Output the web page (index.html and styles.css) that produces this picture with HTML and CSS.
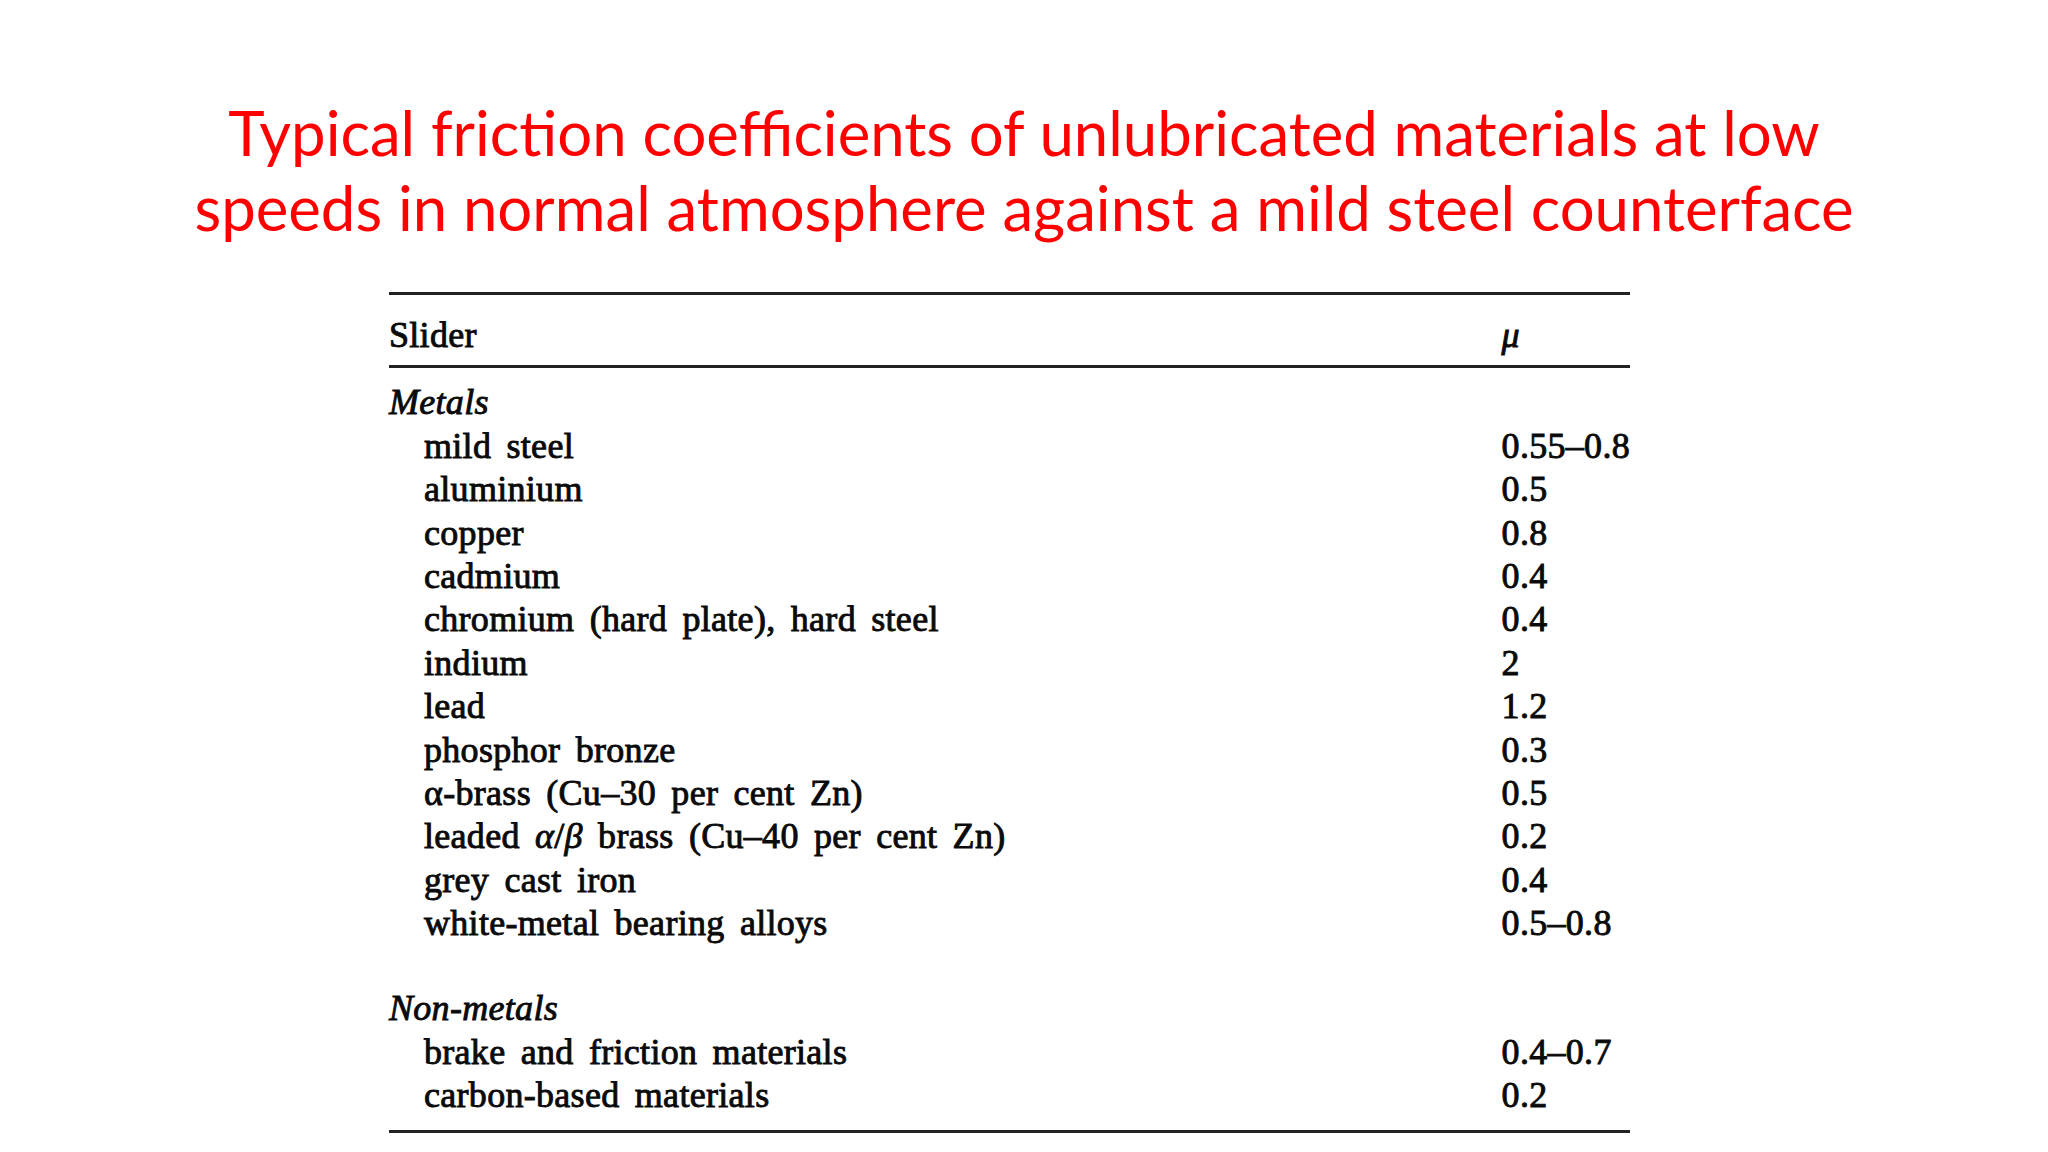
FILE: index.html
```html
<!DOCTYPE html>
<html lang="en">
<head>
    <meta charset="UTF-8">
    <meta name="viewport" content="width=device-width, initial-scale=1.0">
    <title>Typical friction coefficients</title>
    <link rel="stylesheet" href="styles.css">
</head>
<body>
    <div class="slide">
        <h1 class="title">Typical friction coefficients of unlubricated materials at low<br>speeds in normal atmosphere against a mild steel counterface</h1>

        <!-- Scanned table from the textbook -->
        <table class="friction">
            <thead>
                <tr>
                    <th class="col-slider">Slider</th>
                    <th class="col-mu"><i>μ</i></th>
                </tr>
            </thead>
            <tbody>
                <tr class="group first"><td colspan="2"><i>Metals</i></td></tr>
                <tr><td class="item">mild steel</td><td>0.55–0.8</td></tr>
                <tr><td class="item">aluminium</td><td>0.5</td></tr>
                <tr><td class="item">copper</td><td>0.8</td></tr>
                <tr><td class="item">cadmium</td><td>0.4</td></tr>
                <tr><td class="item">chromium (hard plate), hard steel</td><td>0.4</td></tr>
                <tr><td class="item">indium</td><td>2</td></tr>
                <tr><td class="item">lead</td><td>1.2</td></tr>
                <tr><td class="item">phosphor bronze</td><td>0.3</td></tr>
                <tr><td class="item">α-brass (Cu–30 per cent Zn)</td><td>0.5</td></tr>
                <tr><td class="item">leaded <i>α</i>/<i>β</i> brass (Cu–40 per cent Zn)</td><td>0.2</td></tr>
                <tr><td class="item">grey cast iron</td><td>0.4</td></tr>
                <tr><td class="item">white-metal bearing alloys</td><td>0.5–0.8</td></tr>
                <tr class="spacer"><td colspan="2"></td></tr>
                <tr class="group"><td colspan="2"><i>Non-metals</i></td></tr>
                <tr><td class="item">brake and friction materials</td><td>0.4–0.7</td></tr>
                <tr class="last"><td class="item">carbon-based materials</td><td>0.2</td></tr>
            </tbody>
        </table>
    </div>
</body>
</html>
```

FILE: styles.css
```css
body {
    margin: 0;
    background-color: #ffffff;
}
.slide {
    width: 2048px;
    height: 1152px;
    display: flex;
    flex-direction: column;
    align-items: center;
    overflow: hidden;
}
.title {
    margin: 95px 0 48px 0;
    font-family: Lato, "Open Sans", sans-serif;
    font-weight: 400;
    font-size: 61.7px;
    line-height: 74.5px;
    color: #ff0000;
    text-align: center;
}
.friction {
    align-self: flex-start;
    margin-left: 389px;
    width: 1241px;
    border-collapse: collapse;
    font-family: "Liberation Serif", "Times New Roman", serif;
    font-size: 36px;
    line-height: 43.4px;
    letter-spacing: 0.3px;
    word-spacing: 6px;
    color: #0a0a0a;
    -webkit-text-stroke: 0.9px #0a0a0a;
    border-top: 3px solid #222222;
    border-bottom: 3px solid #222222;
}
.friction thead tr {
    border-bottom: 3px solid #222222;
}
.friction th {
    font-weight: 400;
    text-align: left;
    padding: 19px 0 8px 0;
}
.friction td {
    padding: 0;
    text-align: left;
    vertical-align: middle;
    white-space: nowrap;
}
.col-slider {
    width: 1114px;
}
.friction .item {
    padding-left: 35px;
}
.group.first td {
    padding-top: 13px;
}
.spacer td {
    height: 41.6px;
}
.last td {
    padding-bottom: 12px;
}
```
